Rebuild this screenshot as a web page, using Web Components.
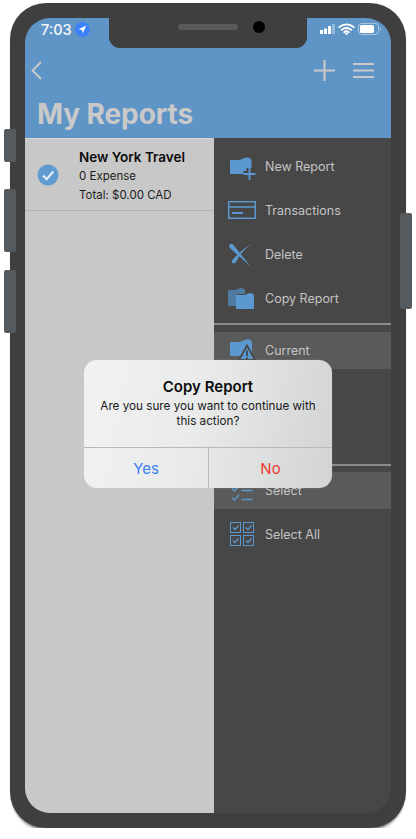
<!DOCTYPE html>
<html lang="en">
<head>
<meta charset="UTF-8">
<title>My Reports</title>
<style>
    html, body { margin: 0; background: #fff; font-family: Inter, "Liberation Sans", sans-serif; }
</style>
</head>
<body>
<template id="phone-tpl">
    <style>
        :host { display: block; position: relative; width: 396px; height: 825px; margin: 3px 0 0 10px; box-sizing: border-box; padding: 15px; background: #3f3f3f; border-radius: 36px; box-shadow: 0 4px 3px -2px rgba(0,0,0,.55); }
        .btn { position: absolute; width: 12px; background: #555a5f; border-radius: 2px; }
        .notch { position: absolute; left: 99px; top: 15px; width: 198px; height: 30px; background: #3f3f3f; border-radius: 0 0 11px 11px; }
        .speaker { position: absolute; left: 69px; top: 6px; width: 60px; height: 6px; border-radius: 3px; background: #5a5a5a; }
        .cam { position: absolute; left: 144px; top: 3px; width: 12px; height: 12px; border-radius: 50%; background: #000; }
        .screen { height: 100%; border-radius: 25px; overflow: hidden; display: flex; flex-direction: column; position: relative; }
    </style>
    <div class="btn" style="left:-6px;top:126px;height:33px"></div>
    <div class="btn" style="left:-6px;top:186px;height:63px"></div>
    <div class="btn" style="left:-6px;top:267px;height:63px"></div>
    <div class="btn" style="right:-6px;top:210px;height:96px"></div>
    <div class="screen"><slot></slot></div>
    <div class="notch"><div class="speaker"></div><div class="cam"></div></div>
</template>

<template id="header-tpl">
    <style>
        :host { display: block; height: 120px; background: #5f95c6; flex: none; color: #fff; }
        .status { height: 22px; display: flex; align-items: center; justify-content: space-between; padding: 0 10px 0 16px; box-sizing: border-box; }
        .left, .right { display: flex; align-items: center; }
        .time { font-size: 14.500px; font-weight: 500; margin-right: 3px; color: #f4f6f8; }
        .nav { display: flex; align-items: center; justify-content: space-between; height: 44px; margin-top: 8px; padding: 0 17px 0 5px; box-sizing: border-box; }
        .tools { display: flex; gap: 17px; align-items: center; }
        h1 { margin: 5px 0 0 12px; font-size: 28px; line-height: 34px; font-weight: 700; color: #c9c9c9; letter-spacing: -.1px; }
        svg { display: block; }
    </style>
    <div class="status">
        <div class="left">
            <span class="time">7:03</span>
            <svg width="15" height="15" viewBox="0 0 15 15"><circle cx="7.500" cy="7.500" r="7.500" fill="#3a82f7"/><path d="M11.200 3.600 3.500 7.300l3.500.6.700 3.600z" fill="#fff"/></svg>
        </div>
        <div class="right" style="gap:3px">
            <svg width="16" height="10" viewBox="0 0 16 10"><rect x="1" y="6" width="3" height="4" rx=".6" fill="#fff"/><rect x="5" y="4.500" width="3" height="5.500" rx=".6" fill="#fff"/><rect x="9" y="2" width="3" height="8" rx=".6" fill="#fff"/><rect x="13" y="0" width="3" height="10" rx=".6" fill="#fff" opacity=".35"/></svg>
            <svg width="17" height="12" viewBox="0 0 17 12"><path d="M1.200 4.200C5.300.5 11.700.5 15.800 4.200M3.700 6.800c2.700-2.400 6.900-2.400 9.600 0M6.200 9.200c1.300-1.100 3.300-1.100 4.600 0" fill="none" stroke="#fff" stroke-width="1.800" stroke-linecap="round"/><circle cx="8.500" cy="10.800" r="1.200" fill="#fff"/></svg>
            <svg width="23" height="12" viewBox="0 0 23 12"><rect x=".5" y=".5" width="20" height="11" rx="3" fill="none" stroke="#fff" stroke-opacity=".45"/><rect x="2" y="2" width="14" height="8" rx="1.600" fill="#fff"/><path d="M22 4.200v3.600c.7-.3 1-1 1-1.800s-.3-1.500-1-1.800z" fill="#fff" opacity=".45"/></svg>
        </div>
    </div>
    <div class="nav">
        <svg width="14" height="20" viewBox="0 0 14 20"><path d="M11 2 2.500 10.500 11 19" fill="none" stroke="#c9c9c9" stroke-width="1.900"/></svg>
        <div class="tools">
            <svg width="23" height="23" viewBox="0 0 23 23"><path d="M11.500 1v21M1 11.500h21" stroke="#c9c9c9" stroke-width="2.200"/></svg>
            <svg width="21" height="17" viewBox="0 0 21 17"><path d="M0 2h21M0 8.500h21M0 15h21" stroke="#c9c9c9" stroke-width="2"/></svg>
        </div>
    </div>
    <h1><slot></slot></h1>
</template>

<template id="report-tpl">
    <style>
        :host { display: flex; align-items: center; height: 73px; box-sizing: border-box; border-top: 1px solid #d4d4d4; border-bottom: 1px solid #b2b2b2; color: #111; }
        .check { width: 54px; padding-left: 12px; box-sizing: border-box; flex: none; margin-top: 1px; }
        svg { display: block; }
        .text { display: flex; flex-direction: column; margin-top: 4px; }
        .t { font-size: 13.500px; font-weight: 600; line-height: 19px; color: #0c0c0c; }
        .s { font-size: 11.500px; line-height: 19.500px; color: #1c1c1c; }
    </style>
    <div class="check"><svg width="22" height="22" viewBox="0 0 22 22"><circle cx="11" cy="11" r="10.500" fill="#5f9bd0"/><path d="M6 11.500l3.700 3.700L16.300 7.500" fill="none" stroke="#e6eef5" stroke-width="2.200"/></svg></div>
    <div class="text">
        <span class="t"><slot name="title"></slot></span>
        <span class="s"><slot name="count"></slot></span>
        <span class="s"><slot name="total"></slot></span>
    </div>
</template>

<template id="item-tpl">
    <style>
        :host { display: flex; align-items: center; height: 44px; color: #c4c4c4; font-size: 12.500px; }
        :host([active]) { height: 37px; background: #5a5a5a; }
        .ic { width: 51px; flex: none; display: flex; }
        ::slotted(svg) { display: block; }
    </style>
    <div class="ic"><slot name="icon"></slot></div>
    <span><slot></slot></span>
</template>

<template id="dialog-tpl">
    <style>
        :host { display: block; position: absolute; left: 59px; top: 342px; width: 248px; height: 128px; border-radius: 13px; overflow: hidden; background: linear-gradient(100deg, #f1f2f2 0%, #e9eaea 45%, #d2d3d4 100%); color: #0b0b0b; text-align: center; box-shadow: 0 0 1px rgba(255,255,255,.5); }
        .body { height: 87px; box-sizing: border-box; padding-top: 18px; }
        .title { font-size: 15px; font-weight: 600; line-height: 18px; }
        .msg { font-size: 11.700px; line-height: 14.500px; margin-top: 3px; padding: 0 8px; color: #1a1a1a; }
        .actions { display: grid; grid-template-columns: 1fr 1fr; height: 41px; border-top: 1px solid #b9b9b9; }
        .actions div { display: flex; align-items: center; justify-content: center; font-size: 15px; }
        .yes { color: #3a82f7; }
        .no { color: #ee3a2e; border-left: 1px solid #b9b9b9; }
    </style>
    <div class="body">
        <div class="title"><slot name="title"></slot></div>
        <div class="msg"><slot name="message"></slot></div>
    </div>
    <div class="actions">
        <div class="yes"><slot name="yes"></slot></div>
        <div class="no"><slot name="no"></slot></div>
    </div>
</template>

<template id="body-tpl">
    <style>
        :host { display: grid; grid-template-columns: 189px 177px; flex: 1; min-height: 0; }
        .list { background: #c8c8c8; }
        .menu { background: #474747; padding-top: 6px; }
    </style>
    <div class="list"><slot name="list"></slot></div>
    <div class="menu"><slot name="menu"></slot></div>
</template>

<phone-frame>
    <app-header>My Reports</app-header>
    <app-body>
        <report-row slot="list">
            <span slot="title">New York Travel</span>
            <span slot="count">0 Expense</span>
            <span slot="total">Total: $0.00 CAD</span>
        </report-row>
        <div slot="menu" style="display:flex;flex-direction:column">
            <menu-item>
                <svg slot="icon" width="51" height="32" viewBox="0 0 51 32"><path d="M16 10h10l4-2c2-.8 7.500-1 7.500 3v13H16z" fill="#5b98cf"/><path d="M35.500 18v12M29.500 24h12" stroke="#474747" stroke-width="6"/><path d="M35.500 18v12M29.500 24h12" stroke="#5b98cf" stroke-width="2"/></svg>
                New Report
            </menu-item>
            <menu-item>
                <svg slot="icon" width="51" height="22" viewBox="0 0 51 22"><rect x="14.700" y="2.700" width="26.600" height="16.600" fill="none" stroke="#5b98cf" stroke-width="1.500"/><path d="M14 8h28" stroke="#5b98cf" stroke-width="1.500"/><path d="M18 14h11" stroke="#5b98cf" stroke-width="2"/></svg>
                Transactions
            </menu-item>
            <menu-item>
                <svg slot="icon" width="51" height="28" viewBox="0 0 51 28"><path d="M15.500 5c1-1.800 3-1.500 4 0C24 11 30 18 37 27 30 20 22 14 16 8c-.8-.8-1-2-.5-3z" fill="#5b98cf"/><path d="M40 2.500C32 7 26 14 22 22c-.8 1.500-3 2-4 .5-.5-.8-.3-1.800.4-2.500C24 13.500 31 7.500 40 2.500z" fill="#5b98cf"/></svg>
                Delete
            </menu-item>
            <menu-item>
                <svg slot="icon" width="51" height="26" viewBox="0 0 51 26"><path d="M14 5h8l3-1.500c2.500-1 6-.3 6 2.500v3h-8v12h-9z" fill="#4f7ba0"/><path d="M22 10h9l3-1.400c3-1 6-.2 6 2V24H22z" fill="#5b98cf"/></svg>
                Copy Report
            </menu-item>
            <hr style="border:0;margin:3px 0 7px;height:2px;background:#8b8b8b;width:100%">
            <menu-item active>
                <svg slot="icon" width="51" height="37" viewBox="0 0 51 37"><path d="M16 10h10l5-2c3-1.300 6.500-.8 7 3v13H16z" fill="#5b98cf"/><path d="M33 13.500 25 28h16z" fill="#5b98cf" stroke="#474747" stroke-width="1.800"/><path d="M33 18.500v5.500M33 25.300v1.600" stroke="#3a3a3a" stroke-width="1.500"/></svg>
                Current
            </menu-item>
            <div style="height:95px"></div>
            <hr style="border:0;margin:0 0 6px;height:2px;background:#8b8b8b;width:100%">
            <menu-item active>
                <svg slot="icon" width="51" height="37" viewBox="0 0 51 37"><path d="M18 16.500l2.500 2.500 4.500-5M18 25.500l2.500 2.500 4.500-5" fill="none" stroke="#5b98cf" stroke-width="1.500"/><path d="M27.500 18.500h11M27.500 27.500h11" stroke="#5b98cf" stroke-width="1.500"/></svg>
                Select
            </menu-item>
            <div style="height:3px"></div>
            <menu-item>
                <svg slot="icon" width="51" height="26" viewBox="0 0 51 26"><g fill="none" stroke="#5b98cf" stroke-width="1"><rect x="16.500" y="1.500" width="10" height="10"/><rect x="29.500" y="1.500" width="10" height="10"/><rect x="16.500" y="14.500" width="10" height="10"/><rect x="29.500" y="14.500" width="10" height="10"/><path d="M19 6.500l2 2 3.500-4M32 6.500l2 2 3.500-4M19 19.500l2 2 3.500-4M32 19.500l2 2 3.500-4" stroke-width="1.200"/></g></svg>
                Select All
            </menu-item>
        </div>
    </app-body>
    <alert-dialog>
        <span slot="title">Copy Report</span>
        <span slot="message">Are you sure you want to continue with this action?</span>
        <span slot="yes">Yes</span>
        <span slot="no">No</span>
    </alert-dialog>
</phone-frame>

<script type="module">
    // every element is just its template in an open shadow root
    const register = (tag, tplId) => {
        const tmp = document.getElementById(tplId);
        customElements.define(tag, class extends HTMLElement {
            constructor() {
                super();
                this.attachShadow({ mode: 'open' }).appendChild(tmp.content.cloneNode(true));
            }
        });
    };
    register('phone-frame', 'phone-tpl');
    register('app-header', 'header-tpl');
    register('app-body', 'body-tpl');
    register('report-row', 'report-tpl');
    register('menu-item', 'item-tpl');
    register('alert-dialog', 'dialog-tpl');
</script>
</body>
</html>
